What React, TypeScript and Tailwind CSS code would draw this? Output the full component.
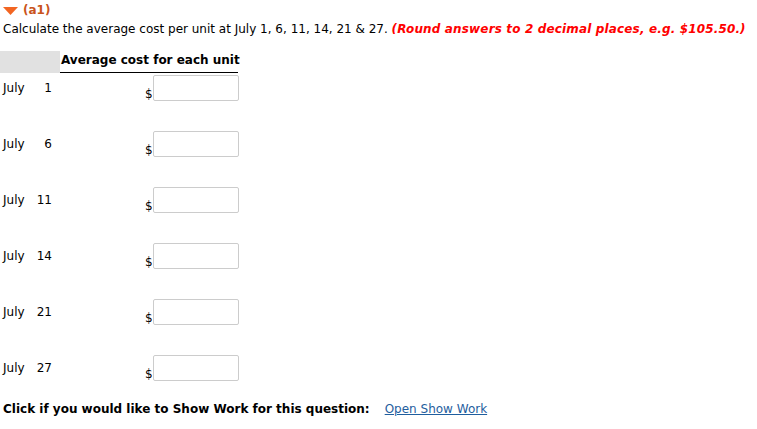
import React from "react";

const rows = ["1", "6", "11", "14", "21", "27"];

export default function App() {
  return (
    <div className="w-[757px] h-[429px] bg-white text-black" style={{ fontFamily: '"DejaVu Sans", Verdana, sans-serif' }}>
      <div className="pl-[3px] pt-[2px]">
        <div className="flex items-center gap-[5px] h-[16px]">
          <svg width="15" height="8" viewBox="0 0 15 8" className="mt-[1px]">
            <polygon points="0,0 15,0 7.5,8" fill="#f26522" />
          </svg>
          <span className="text-[12px] font-bold text-[#c9541c]">(a1)</span>
        </div>
        <div className="text-[12px] leading-[16px] mt-[3px] whitespace-nowrap">
          Calculate the average cost per unit at July 1, 6, 11, 14, 21 &amp; 27.{" "}
          <span className="italic font-bold text-[#ff0000] tracking-[0.15px]">(Round answers to 2 decimal places, e.g. $105.50.)</span>
        </div>
      </div>
      <div className="mt-[14px] flex">
        <div className="w-[60px] h-[22px] bg-[#e1e1e1]" />
        <div className="w-[178px] h-[22px] border-b border-black text-[12px] font-bold leading-[16px] pt-[1px] pl-[1px] whitespace-nowrap">
          Average cost for each unit
        </div>
      </div>
      <div className="flex flex-col">
        {rows.map((d) => (
          <div key={d} className="flex h-[56px]">
            <div className="w-[52px] flex pl-[3px] pt-[7px] text-[12px] leading-[16px]">
              <span>July</span>
              <span className="ml-auto">{d}</span>
            </div>
            <div className="w-[93px]" />
            <div className="flex items-end h-[28px] pt-[2px]">
              <span className="text-[12px] leading-[14px]">$</span>
              <div className="w-[86px] h-[26px] border border-[#cccccc] rounded-[2px]" />
            </div>
          </div>
        ))}
      </div>
      <div className="-mt-[8px] pl-[3px] flex text-[12px] leading-[16px] whitespace-nowrap">
        <span className="font-bold">Click if you would like to Show Work for this question:</span>
        <span className="ml-[15px] text-[#1f5e9e] underline">Open Show Work</span>
      </div>
    </div>
  );
}
